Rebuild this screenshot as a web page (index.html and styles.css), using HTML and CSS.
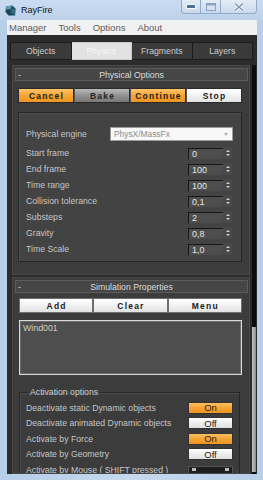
FILE: index.html
```html
<!DOCTYPE html>
<html>
<head>
<meta charset="utf-8">
<title>RayFire</title>
<link rel="stylesheet" href="styles.css">
</head>
<body>
<div class="win">
  <div class="titlebar">
    <svg class="appicon" viewBox="0 0 11 11" width="11" height="11">
      <path d="M1 1.5 L7 0.5 L10.5 3.5 L10 10.5 L3.5 10.5 L0.5 7 Z" fill="#1d4654"/>
      <path d="M1 1.5 L7 0.5 L5.5 4 L1.2 4.5 Z" fill="#5c9fb3"/>
      <path d="M5.5 4 L10.5 3.5 L10 10.5 L6 7.5 Z" fill="#2f6b7d"/>
    </svg>
    <span class="title">RayFire</span>
    <div class="caps">
      <div class="cap cap-min">
        <svg width="10" height="5" viewBox="0 0 10 5"><rect x="0.5" y="0.5" width="9" height="4" fill="#4d6f98" stroke="#f4f8fc" stroke-width="1"/></svg>
      </div>
      <div class="cap cap-max">
        <svg width="10" height="8" viewBox="0 0 10 8"><rect x="0.5" y="0.5" width="9" height="7" fill="none" stroke="#8aa2c2" stroke-width="1"/><rect x="1" y="1" width="8" height="1.5" fill="#8aa2c2"/></svg>
      </div>
      <div class="cap cap-close">
        <svg width="12" height="10" viewBox="0 0 12 10"><path d="M2 1.5 L10 8.5 M10 1.5 L2 8.5" stroke="#f6f9fc" stroke-width="3.2"/><path d="M2 1.5 L10 8.5 M10 1.5 L2 8.5" stroke="#7f95b3" stroke-width="1.6"/></svg>
      </div>
    </div>
  </div>
  <div class="frame">
    <div class="menubar">
      <span>Manager</span><span>Tools</span><span>Options</span><span>About</span>
    </div>
    <div class="dark">
      <div class="tabs">
        <div class="tab">Objects</div>
        <div class="tab active">Physics</div>
        <div class="tab">Fragments</div>
        <div class="tab">Layers</div>
      </div>
      <div class="content">
        <div class="rollouts">
          <div class="rollout r1">
            <div class="rhead"><span class="minus">-</span><span class="rtitle">Physical Options</span><span></span></div>
            <div class="btnrow">
              <div class="btn orange">Cancel</div>
              <div class="btn grey">Bake</div>
              <div class="btn orange">Continue</div>
              <div class="btn white">Stop</div>
            </div>
            <div class="group">
              <div class="row engine">
                <span class="lbl">Physical engine</span>
                <div class="dropdown"><span>PhysX/MassFx</span><span class="ddarrow"></span></div>
              </div>
              <div class="row"><span class="lbl">Start frame</span><div class="spin"><span class="field">0</span><span class="arrows"></span></div></div>
              <div class="row"><span class="lbl">End frame</span><div class="spin"><span class="field">100</span><span class="arrows"></span></div></div>
              <div class="row"><span class="lbl">Time range</span><div class="spin"><span class="field">100</span><span class="arrows"></span></div></div>
              <div class="row"><span class="lbl">Collision tolerance</span><div class="spin"><span class="field">0,1</span><span class="arrows"></span></div></div>
              <div class="row"><span class="lbl">Substeps</span><div class="spin"><span class="field">2</span><span class="arrows"></span></div></div>
              <div class="row"><span class="lbl">Gravity</span><div class="spin"><span class="field">0,8</span><span class="arrows"></span></div></div>
              <div class="row"><span class="lbl">Time Scale</span><div class="spin"><span class="field">1,0</span><span class="arrows"></span></div></div>
            </div>
          </div>
          <div class="rollout r2">
            <div class="rhead"><span class="minus">-</span><span class="rtitle">Simulation Properties</span><span></span></div>
            <div class="btnrow three">
              <div class="btn white">Add</div>
              <div class="btn white">Clear</div>
              <div class="btn white">Menu</div>
            </div>
            <div class="listbox">Wind001</div>
            <fieldset class="opts">
              <legend>Activation options</legend>
              <div class="orow"><span class="lbl">Deactivate static Dynamic objects</span><div class="tog on">On</div></div>
              <div class="orow"><span class="lbl">Deactivate animated Dynamic objects</span><div class="tog off">Off</div></div>
              <div class="orow"><span class="lbl">Activate by Force</span><div class="tog on">On</div></div>
              <div class="orow"><span class="lbl">Activate by Geometry</span><div class="tog off">Off</div></div>
              <div class="orow"><span class="lbl">Activate by Mouse ( SHIFT pressed )</span><div class="slider"><span class="sl-left"></span><span class="sl-right"></span></div></div>
            </fieldset>
          </div>
        </div>
        <div class="scrollbar"><div class="thumb"></div></div>
      </div>
    </div>
  </div>
</div>
</body>
</html>
```

FILE: styles.css
```css
* { box-sizing: border-box; }
html, body { margin: 0; padding: 0; }
body {
  width: 263px;
  height: 480px;
  overflow: hidden;
  background: #bcd2ea;
  font-family: "Liberation Sans", Arial, sans-serif;
}
.win {
  height: 480px;
  display: flex;
  flex-direction: column;
  background: linear-gradient(90deg, #b6cee8, #c5d8ed 50%, #b8cfe9);
}
.titlebar {
  height: 20px;
  flex: none;
  display: flex;
  align-items: center;
  padding-left: 5px;
  background: linear-gradient(#cadcf0, #bcd2ea);
}
.appicon { display: block; width: 11px; height: 11px; }
.title {
  margin-left: 5px;
  font-size: 9px;
  color: #141414;
}
.caps {
  display: flex;
  margin-left: auto;
  margin-right: 6px;
  align-self: flex-start;
  height: 14px;
}
.cap {
  height: 14px;
  display: flex;
  align-items: center;
  justify-content: center;
  border: 1px solid #93abc8;
  border-top: none;
  background: linear-gradient(#e3ecf7, #c9d9ec);
}
.cap svg { display: block; }
.cap-min { width: 19px; border-radius: 0 0 0 4px; border-right: none; }
.cap-max { width: 21px; }
.cap-close { width: 36px; border-left: none; border-radius: 0 0 4px 0; }

.frame {
  flex: 1;
  min-height: 0;
  display: flex;
  flex-direction: column;
  padding: 0 6px 6px 7px;
}
.menubar {
  height: 15px;
  flex: none;
  display: flex;
  align-items: center;
  gap: 12px;
  padding-left: 2px;
  background: #f1f1f1;
  font-size: 9.5px;
  color: #5c5c5c;
}
.dark {
  flex: 1;
  min-height: 0;
  display: flex;
  flex-direction: column;
  padding-top: 7px;
  background: #2c2c2c;
  overflow: hidden;
}
.tabs {
  flex: none;
  display: flex;
  height: 18px;
  margin: 0 4px 0 3px;
}
.tab {
  flex: 1;
  display: flex;
  align-items: center;
  justify-content: center;
  background: #3a3a3a;
  border: 1px solid #1c1c1c;
  color: #cbcbcb;
  font-size: 8.7px;
}
.tab + .tab { border-left: none; }
.tab.active {
  background: #e2e2e2;
  border-color: #c9c9c9;
  color: #f7f7f7;
}
.content {
  flex: 1;
  min-height: 0;
  display: flex;
  margin-top: 5px;
}
.rollouts {
  width: 238px;
  margin-left: 5px;
  display: flex;
  flex-direction: column;
  gap: 2px;
}
.rollout {
  display: flex;
  flex-direction: column;
  background: #3c3c3c;
  border: 1px solid #484848;
  padding: 2px 1px 0 2px;
}
.r1 { height: 210px; flex: none; }
.r2 { flex: 1; min-height: 0; overflow: hidden; }
.rhead {
  flex: none;
  height: 13px;
  display: grid;
  grid-template-columns: 1fr auto 1fr;
  align-items: center;
  border: 1px solid #5c5c5c;
  background: #464646;
  font-size: 8.7px;
  color: #dcdcdc;
}
.minus { padding-left: 2px; }

.btnrow {
  flex: none;
  display: grid;
  grid-template-columns: repeat(4, 1fr);
  height: 15px;
  margin: 7px 6px 0 3px;
}
.btnrow.three {
  grid-template-columns: repeat(3, 1fr);
  margin: 5px 6px 0 4px;
}
.btn {
  display: flex;
  align-items: center;
  justify-content: center;
  padding-left: 1px;
  border: 1px solid #2b2b2b;
  font-size: 8.5px;
  font-weight: bold;
  letter-spacing: 1.2px;
  color: #1c1c1c;
}
.btn + .btn { border-left: 1px solid #555; }
.orange { background: linear-gradient(#fdc46a, #f6a436 50%, #ee951f); }
.grey { background: linear-gradient(#b9b9b9, #929292 50%, #787878); color: #262626; }
.white { background: linear-gradient(#ffffff, #f1f1f1 50%, #e2e2e2); }
.three .btn { border-color: #6e6e6e; }

.group {
  flex: none;
  height: 150px;
  margin: 9px 6px 0 3px;
  padding: 14px 9px 0 7px;
  border: 1px solid #262626;
  box-shadow: inset 1px 1px 0 #505050;
  background: #434343;
}
.row {
  display: flex;
  align-items: center;
  justify-content: space-between;
  height: 16px;
}
.row.engine { height: 14px; margin-bottom: 4px; }
.lbl {
  font-size: 8.7px;
  color: #c6c6c6;
  white-space: nowrap;
}
.dropdown {
  width: 123px;
  height: 14px;
  margin-right: -1px;
  display: flex;
  align-items: center;
  justify-content: space-between;
  padding: 0 4px 0 3px;
  background: #f8f8f8;
  border: 1px solid #9c9c9c;
  font-size: 8.4px;
  color: #8a8a8a;
}
.ddarrow {
  width: 0;
  height: 0;
  border-left: 2.5px solid transparent;
  border-right: 2.5px solid transparent;
  border-top: 3px solid #b0b0b0;
}
.spin {
  display: flex;
  width: 44px;
  height: 11px;
}
.field {
  flex: 1;
  background: #4e4e4e;
  border-top: 1px solid #161616;
  border-left: 1px solid #161616;
  color: #e4e4e4;
  font-size: 9px;
  line-height: 10px;
  padding-left: 3px;
}
.arrows {
  width: 9px;
  display: flex;
  flex-direction: column;
  align-items: center;
  justify-content: center;
  gap: 2px;
  background: #4a4a4a;
}
.arrows::before, .arrows::after {
  content: "";
  width: 0;
  height: 0;
  border-left: 2px solid transparent;
  border-right: 2px solid transparent;
}
.arrows::before { border-bottom: 2.5px solid #d0d0d0; }
.arrows::after { border-top: 2.5px solid #d0d0d0; }

.listbox {
  flex: none;
  height: 55px;
  margin: 7px 6px 0 4px;
  padding: 2px 3px;
  border: 1px solid #dadada;
  box-shadow: inset 0 0 0 1px #6c6c6c;
  background: #4e4e4e;
  font-size: 8.8px;
  color: #cdcdcd;
}
.opts {
  margin: 12px 8px 0 4px;
  padding: 3px 6px 0 6px;
  border: 1px solid #262626;
  box-shadow: inset 1px 1px 0 #4c4c4c;
  min-width: 0;
}
.opts legend {
  margin-left: 2px;
  padding: 0 2px;
  font-size: 8.7px;
  line-height: 10px;
  color: #cdcdcd;
}
.orow {
  display: flex;
  align-items: center;
  justify-content: space-between;
  height: 15.5px;
}
.tog {
  width: 45px;
  height: 12px;
  display: flex;
  align-items: center;
  justify-content: center;
  border: 1px solid #333;
  font-size: 9.5px;
  color: #1e1e1e;
}
.tog.on { background: linear-gradient(#fcc062, #f5a233 50%, #ee951f); }
.tog.off { background: linear-gradient(#ffffff, #eeeeee 50%, #e0e0e0); }
.slider {
  width: 45px;
  height: 8px;
  display: flex;
  align-items: center;
  justify-content: space-between;
  padding: 0 3px;
  background: #1e1e1e;
  border: 1px solid #555;
}
.sl-left, .sl-right {
  width: 4px;
  height: 3px;
  background: #bdbdbd;
}
.scrollbar {
  width: 4px;
  margin-left: 2px;
  background: #0d0d0d;
  display: flex;
  flex-direction: column;
}
.thumb {
  margin-top: 262px;
  height: 145px;
  background: linear-gradient(90deg, #c4c4c4, #8c8c8c);
}
```
